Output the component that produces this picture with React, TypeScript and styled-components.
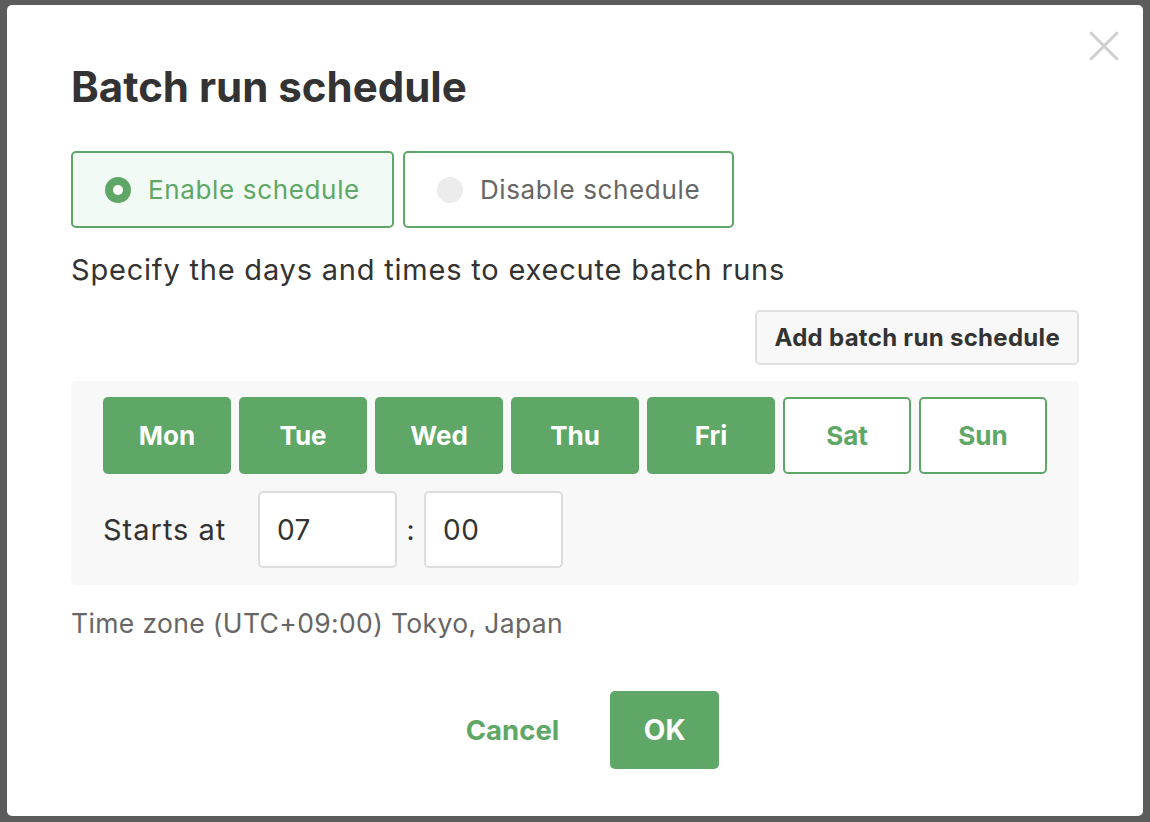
import React, { useState } from 'react'
import styled, { createGlobalStyle } from 'styled-components'

const GREEN = '#5ea766'

const GlobalStyle = createGlobalStyle`
  html, body {
    margin: 0;
    padding: 0;
    background: #5c5c5c;
    font-family: Inter, "Noto Sans", "Liberation Sans", sans-serif;
  }
  * { box-sizing: border-box; }
`

const Backdrop = styled.div`
  width: 1150px;
  height: 822px;
  padding: 5px 7px 6px 7px;
  background: #5c5c5c;
`

const Modal = styled.div`
  position: relative;
  height: 811px;
  background: #fff;
  border-radius: 5px;
  padding: 58px 64px 0 64px;
  display: flex;
  flex-direction: column;
`

const Close = styled.button`
  position: absolute;
  top: 24px;
  right: 22px;
  width: 34px;
  height: 34px;
  border: none;
  background: none;
  padding: 0;
  cursor: pointer;
`

const Title = styled.h1`
  margin: 0;
  font-size: 42px;
  line-height: 48px;
  font-weight: 700;
  color: #333;
  letter-spacing: 0;
`

const RadioRow = styled.div`
  display: flex;
  gap: 9px;
  margin-top: 40px;
`

const RadioCard = styled.label<{ $active: boolean }>`
  display: flex;
  align-items: center;
  height: 77px;
  padding: 0 32px;
  border: 2px solid ${GREEN};
  border-radius: 5px;
  background: ${p => (p.$active ? '#f1faf5' : '#fff')};
  color: ${p => (p.$active ? GREEN : '#666')};
  font-size: 26px;
  letter-spacing: 0.65px;
  cursor: pointer;
`

const Dot = styled.span<{ $active: boolean }>`
  width: 26px;
  height: 26px;
  border-radius: 50%;
  margin-right: 17px;
  background: ${p => (p.$active ? GREEN : '#ececec')};
  display: flex;
  align-items: center;
  justify-content: center;
  &::after {
    content: '';
    width: 10px;
    height: 10px;
    border-radius: 50%;
    background: #fff;
    display: ${p => (p.$active ? 'block' : 'none')};
  }
`

const Lead = styled.p`
  margin: 22px 0 0;
  font-size: 29px;
  line-height: 40px;
  letter-spacing: 0.8px;
  color: #333;
`

const AddRow = styled.div`
  display: flex;
  justify-content: flex-end;
  margin-top: 20px;
`

const AddButton = styled.button`
  height: 55px;
  padding: 0 17px;
  background: #f8f8f8;
  border: 2px solid #e0e0e0;
  border-radius: 5px;
  font-family: inherit;
  font-size: 24px;
  letter-spacing: 0.3px;
  font-weight: 700;
  color: #333;
`

const Panel = styled.div`
  margin-top: 16px;
  background: #f8f8f8;
  border-radius: 5px;
  padding: 16px 32px 17px 32px;
  display: flex;
  flex-direction: column;
  gap: 17px;
`

const Days = styled.div`
  display: flex;
  gap: 8px;
`

const Day = styled.button<{ $on: boolean }>`
  width: 128px;
  height: 77px;
  border-radius: 5px;
  border: 2px solid ${GREEN};
  background: ${p => (p.$on ? GREEN : '#fff')};
  color: ${p => (p.$on ? '#fff' : GREEN)};
  font-family: inherit;
  font-size: 26px;
  font-weight: 700;
  cursor: pointer;
`

const TimeRow = styled.div`
  display: flex;
  align-items: center;
`

const TimeLabel = styled.span`
  font-size: 29px;
  letter-spacing: 1px;
  color: #333;
  width: 155px;
`

const TimeInput = styled.input`
  width: 139px;
  height: 77px;
  border: 2px solid #ddd;
  border-radius: 5px;
  background: #fff;
  padding: 0 17px;
  font-family: inherit;
  font-size: 28px;
  letter-spacing: 0.5px;
  color: #333;
  outline: none;
`

const Colon = styled.span`
  width: 27px;
  text-align: center;
  font-size: 28px;
  color: #333;
`

const Zone = styled.p`
  margin: 21px 0 0;
  font-size: 26.5px;
  line-height: 34px;
  letter-spacing: 0.35px;
  color: #666;
`

const Footer = styled.div`
  display: flex;
  justify-content: center;
  align-items: center;
  gap: 51px;
  margin-top: 51px;
  padding-left: 35px;
`

const TextButton = styled.button`
  border: none;
  background: none;
  color: ${GREEN};
  font-family: inherit;
  font-size: 27.5px;
  font-weight: 700;
  padding: 0;
`

const OkButton = styled.button`
  width: 109px;
  height: 78px;
  border: none;
  border-radius: 5px;
  background: ${GREEN};
  color: #fff;
  font-family: inherit;
  font-size: 28px;
  font-weight: 700;
`

const DAYS = ['Mon', 'Tue', 'Wed', 'Thu', 'Fri', 'Sat', 'Sun']

export default function App() {
  const [enabled, setEnabled] = useState(true)
  const [days, setDays] = useState<string[]>(['Mon', 'Tue', 'Wed', 'Thu', 'Fri'])
  const [hour, setHour] = useState('07')
  const [minute, setMinute] = useState('00')

  const toggleDay = (d: string) => {
    setDays(prev => (prev.includes(d) ? prev.filter(x => x !== d) : [...prev, d]))
  }

  return (
    <>
      <GlobalStyle />
      <Backdrop>
        <Modal>
          <Close aria-label="close">
            <svg width="34" height="34" viewBox="0 0 34 34">
              <path d="M4 4 L30 30 M30 4 L4 30" stroke="#cfcfcf" strokeWidth="3" strokeLinecap="round" />
            </svg>
          </Close>
          <Title>Batch run schedule</Title>
          <RadioRow>
            <RadioCard $active={enabled} onClick={() => setEnabled(true)}>
              <Dot $active={enabled} />
              Enable schedule
            </RadioCard>
            <RadioCard $active={!enabled} onClick={() => setEnabled(false)}>
              <Dot $active={!enabled} />
              Disable schedule
            </RadioCard>
          </RadioRow>
          <Lead>Specify the days and times to execute batch runs</Lead>
          <AddRow>
            <AddButton>Add batch run schedule</AddButton>
          </AddRow>
          <Panel>
            <Days>
              {DAYS.map(d => (
                <Day key={d} $on={days.includes(d)} onClick={() => toggleDay(d)}>
                  {d}
                </Day>
              ))}
            </Days>
            <TimeRow>
              <TimeLabel>Starts at</TimeLabel>
              <TimeInput value={hour} onChange={e => setHour(e.target.value)} />
              <Colon>:</Colon>
              <TimeInput value={minute} onChange={e => setMinute(e.target.value)} />
            </TimeRow>
          </Panel>
          <Zone>Time zone (UTC+09:00) Tokyo, Japan</Zone>
          <Footer>
            <TextButton>Cancel</TextButton>
            <OkButton>OK</OkButton>
          </Footer>
        </Modal>
      </Backdrop>
    </>
  )
}
